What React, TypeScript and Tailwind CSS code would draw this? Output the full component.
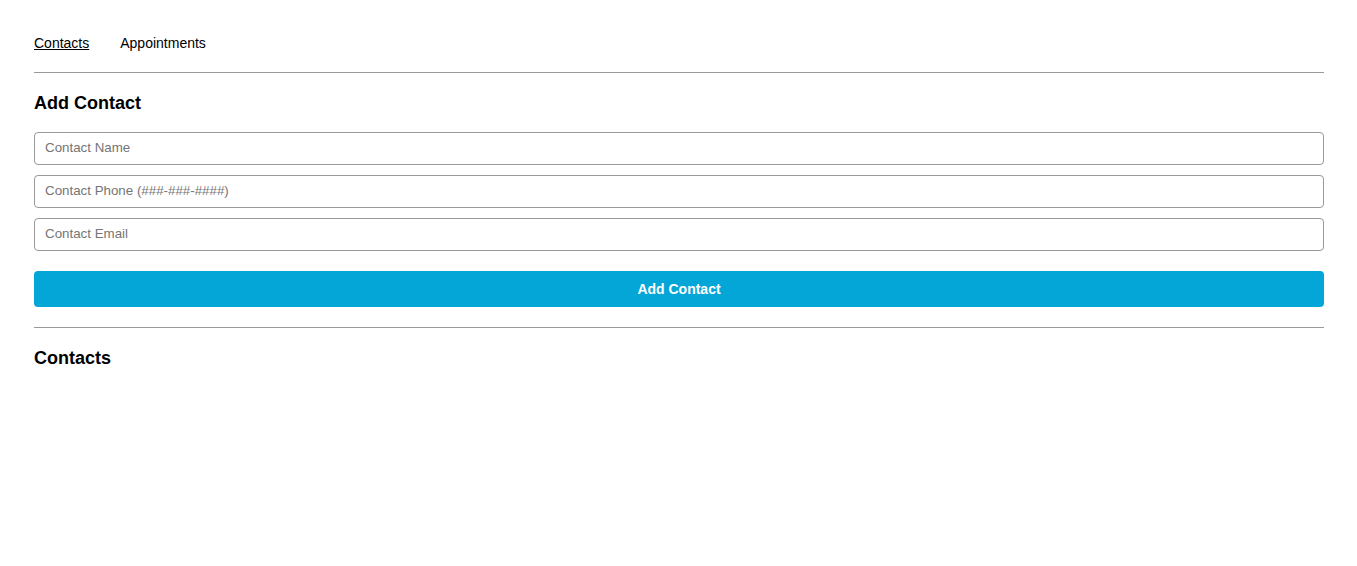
import { useState } from "react";

const font = { fontFamily: '"Liberation Sans", Arial, sans-serif' };

export default function App() {
  const [name, setName] = useState("");
  const [phone, setPhone] = useState("");
  const [email, setEmail] = useState("");
  const [tab, setTab] = useState("contacts");

  const inputCls =
    "w-full h-[33px] px-[10px] pb-[2px] text-[13.333px] text-black border border-[#999] rounded-[4px] outline-none placeholder:text-[#757575]";

  return (
    <div className="min-h-screen bg-white text-black pt-[35px] pl-[34px] pr-[33px]" style={font}>
      <nav className="flex items-center h-4 text-[14px] leading-4">
        <a
          href="#"
          onClick={(e) => { e.preventDefault(); setTab("contacts"); }}
          className={tab === "contacts" ? "underline text-black" : "text-black"}
        >
          Contacts
        </a>
        <a
          href="#"
          onClick={(e) => { e.preventDefault(); setTab("appointments"); }}
          className={"ml-[31px] " + (tab === "appointments" ? "underline text-black" : "text-black")}
        >
          Appointments
        </a>
      </nav>

      <hr className="mt-[21px] border-t border-[#999]" />

      <h3 className="mt-[20px] text-[18px] leading-[21px] font-bold">Add Contact</h3>

      <form
        className="mt-[18px] flex flex-col"
        onSubmit={(e) => { e.preventDefault(); setName(""); setPhone(""); setEmail(""); }}
      >
        <div className="flex flex-col gap-[10px]">
          <input className={inputCls} style={font} placeholder="Contact Name" value={name} onChange={(e) => setName(e.target.value)} />
          <input className={inputCls} style={font} placeholder="Contact Phone (###-###-####)" value={phone} onChange={(e) => setPhone(e.target.value)} />
          <input className={inputCls} style={font} placeholder="Contact Email" value={email} onChange={(e) => setEmail(e.target.value)} />
        </div>
        <button
          type="submit"
          className="mt-[20px] h-[36px] w-full rounded-[4px] bg-[#04a6d8] text-white text-[14px] font-bold"
          style={font}
        >
          Add Contact
        </button>
      </form>

      <hr className="mt-[20px] border-t border-[#999]" />

      <h3 className="mt-[20px] text-[18px] leading-[21px] font-bold">Contacts</h3>
    </div>
  );
}
